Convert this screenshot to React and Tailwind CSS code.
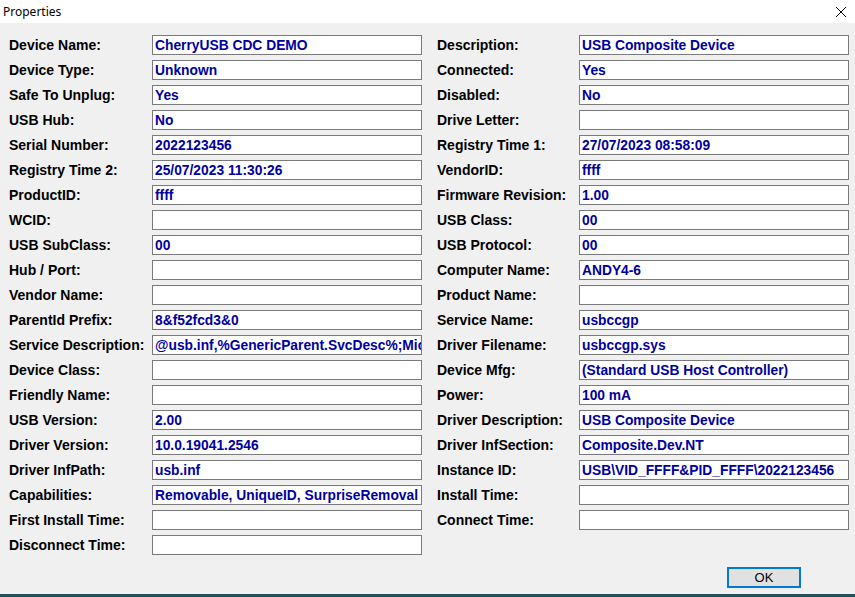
import React from 'react';

const left = [
  ['Device Name:', 'CherryUSB CDC DEMO'],
  ['Device Type:', 'Unknown'],
  ['Safe To Unplug:', 'Yes'],
  ['USB Hub:', 'No'],
  ['Serial Number:', '2022123456'],
  ['Registry Time 2:', '25/07/2023 11:30:26'],
  ['ProductID:', 'ffff'],
  ['WCID:', ''],
  ['USB SubClass:', '00'],
  ['Hub / Port:', ''],
  ['Vendor Name:', ''],
  ['ParentId Prefix:', '8&f52fcd3&0'],
  ['Service Description:', '@usb.inf,%GenericParent.SvcDesc%;Mic'],
  ['Device Class:', ''],
  ['Friendly Name:', ''],
  ['USB Version:', '2.00'],
  ['Driver Version:', '10.0.19041.2546'],
  ['Driver InfPath:', 'usb.inf'],
  ['Capabilities:', 'Removable, UniqueID, SurpriseRemoval'],
  ['First Install Time:', ''],
  ['Disconnect Time:', ''],
];

const right = [
  ['Description:', 'USB Composite Device'],
  ['Connected:', 'Yes'],
  ['Disabled:', 'No'],
  ['Drive Letter:', ''],
  ['Registry Time 1:', '27/07/2023 08:58:09'],
  ['VendorID:', 'ffff'],
  ['Firmware Revision:', '1.00'],
  ['USB Class:', '00'],
  ['USB Protocol:', '00'],
  ['Computer Name:', 'ANDY4-6'],
  ['Product Name:', ''],
  ['Service Name:', 'usbccgp'],
  ['Driver Filename:', 'usbccgp.sys'],
  ['Device Mfg:', '(Standard USB Host Controller)'],
  ['Power:', '100 mA'],
  ['Driver Description:', 'USB Composite Device'],
  ['Driver InfSection:', 'Composite.Dev.NT'],
  ['Instance ID:', 'USB\\VID_FFFF&PID_FFFF\\2022123456'],
  ['Install Time:', ''],
  ['Connect Time:', ''],
];

const Field = ({ label, value, labelW }) => (
  <div className="flex items-center h-[20px]">
    <span className={`${labelW} shrink-0 text-[14px] font-bold text-black leading-none`}>{label}</span>
    <div className="w-[270px] h-[20px] bg-white border border-[#7a7a7a] overflow-hidden whitespace-nowrap flex items-center pl-[2px] pt-[1px]">
      <span className="text-[13.8px] font-bold text-[#0000a0] leading-none">{value}</span>
    </div>
  </div>
);

export default function App() {
  return (
    <div className="w-[855px] h-[597px] flex flex-col bg-[#f0f0f0] overflow-hidden" style={{ fontFamily: '"Liberation Sans", Arial, sans-serif' }}>
      <div className="h-[23px] bg-white flex items-center justify-between pl-[3px] pr-[6px] shrink-0">
        <span className="text-[12px] text-black" style={{ fontFamily: '"Noto Sans", "Liberation Sans", sans-serif' }}>Properties</span>
        <svg width="12" height="12" viewBox="0 0 12 12" className="mr-[2px]">
          <path d="M1 1 L11 11 M11 1 L1 11" stroke="#000" strokeWidth="1" />
        </svg>
      </div>
      <div className="flex-1 flex flex-col pt-[12px] pl-[9px]">
        <div className="flex gap-[15px]">
          <div className="flex flex-col gap-[5px]">
            {left.map(([l, v]) => <Field key={l} label={l} value={v} labelW="w-[143px]" />)}
          </div>
          <div className="flex flex-col gap-[5px]">
            {right.map(([l, v]) => <Field key={l} label={l} value={v} labelW="w-[142px]" />)}
          </div>
        </div>
        <div className="flex justify-end pr-[54px] mt-[12px]">
          <button className="w-[74px] h-[21px] bg-[#e1e1e1] border-2 border-[#0078d7] text-[13px] text-black leading-none flex items-center justify-center">
            OK
          </button>
        </div>
      </div>
      <div className="h-[3px] bg-[#214f5b] shrink-0" />
    </div>
  );
}
